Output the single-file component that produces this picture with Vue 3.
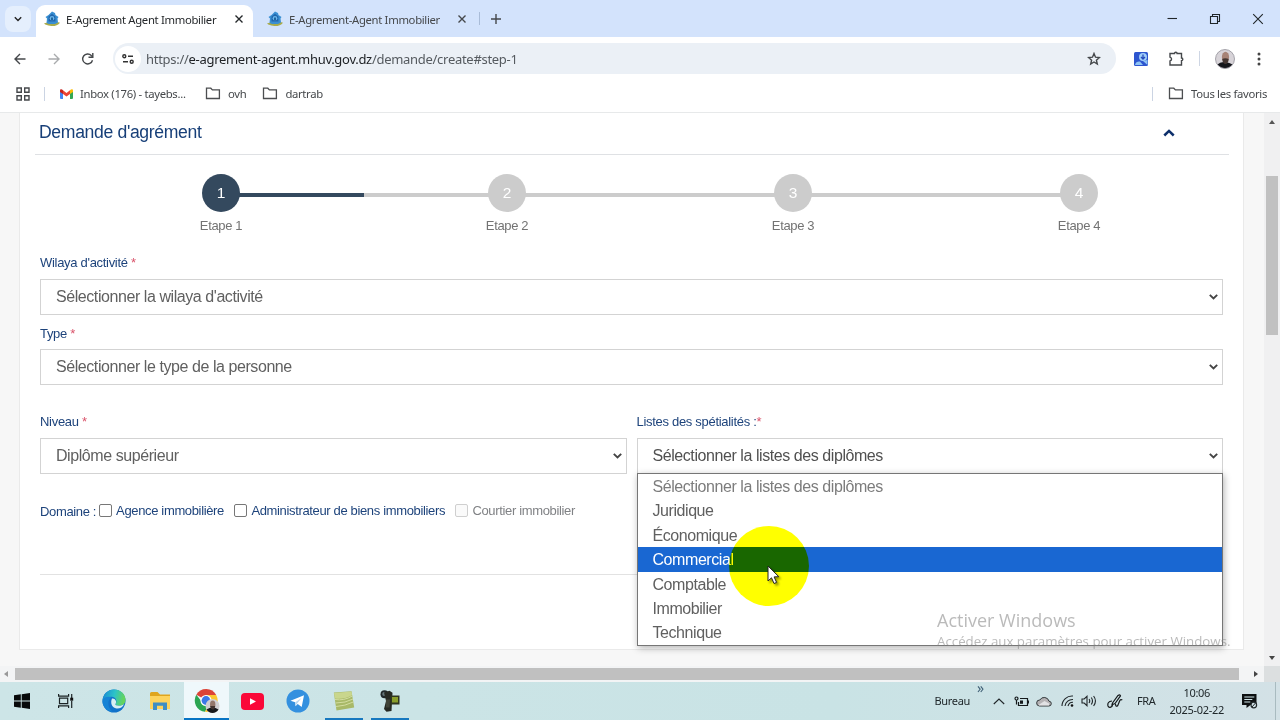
<template>
  <div class="screen">
    <header class="browser">
      <div class="tab-strip">
        <button class="tab-search">
          <svg width="10" height="10" viewBox="0 0 10 10"><path d="M1.800 3.300 5 6.500l3.200-3.200" class="stroke" /></svg>
        </button>
        <div v-for="tab in tabs" :key="tab.title" class="tab" :class="{ active: tab.active }">
          <svg class="favicon" width="16" height="16" viewBox="0 0 16 16">
            <path d="M0 12.500c3-1.800 6 .4 9-.6 2-.8 5-.9 7-.2-2 3-7 4-10 3.100-2-.5-4.500-.9-6-2.300z" fill="#a9ab4b" />
            <path d="M8 .5 11 2l.5 2L14.500 6l-1 1.500.5 4-3 1.500H5L2.500 12 3 7.400 1.500 6l3-2z" fill="#3a8fd2" />
            <path d="M4.500 5.500 8 2.800l3.400 2.700v5H4.500z" fill="#2267ad" />
            <circle cx="8" cy="7.200" r="2.300" fill="#6bb8ec" />
            <path d="M7 6.400h2v3H7z" fill="#20649f" />
          </svg>
          <span class="tab-title">{{ tab.title }}</span>
          <svg class="tab-close" width="10" height="10" viewBox="0 0 10 10"><path d="M1.500 1.500l7 7M8.500 1.500l-7 7" class="stroke" /></svg>
        </div>
        <span class="tab-divider"></span>
        <svg class="new-tab" width="12" height="12" viewBox="0 0 12 12"><path d="M6 1v10M1 6h10" class="stroke" /></svg>
        <div class="window-buttons">
          <svg width="12" height="12" viewBox="0 0 12 12"><path d="M1.500 5.500h9.500" class="thin" /></svg>
          <svg width="12" height="12" viewBox="0 0 12 12"><path d="M1.500 3.500h7v7h-7zM3.500 3.500v-2h7v7h-2" class="thin" /></svg>
          <svg width="12" height="12" viewBox="0 0 12 12"><path d="M1.200 1.200l9.600 9.600M10.800 1.200l-9.600 9.600" class="thin" /></svg>
        </div>
      </div>

      <div class="toolbar">
        <svg class="nav-icon" width="14" height="14" viewBox="0 0 14 14"><path d="M12.500 7H2M7 2 2 7l5 5" class="stroke" /></svg>
        <svg class="nav-icon muted" width="14" height="14" viewBox="0 0 14 14"><path d="M1.500 7H12M7 2l5 5-5 5" class="stroke" /></svg>
        <svg class="nav-icon" width="14" height="14" viewBox="0 0 14 14">
          <path d="M11.500 8.200A5 5 0 1 1 10.300 3.500L11.500 4.700" class="stroke" /><path d="M11.800 1v4.300H7.500" class="stroke" />
        </svg>
        <div class="address">
          <span class="site-info">
            <svg width="14" height="14" viewBox="0 0 14 14">
              <circle cx="3.300" cy="4.200" r="1.500" class="stroke" /><path d="M7 4.200h5M2 9.800h5" class="stroke" /><circle cx="10.700" cy="9.800" r="1.500" class="stroke" />
            </svg>
          </span>
          <span class="url">https://<b>e-agrement-agent.mhuv.gov.dz</b>/demande/create#step-1</span>
          <svg class="star" width="14" height="14" viewBox="0 0 14 14">
            <path d="M7 1.500 8.500 5.200l3.900.3-3 2.700.9 3.900L7 10l-3.300 2.100.9-3.900-3-2.700 3.900-.3z" class="stroke" />
          </svg>
        </div>
        <svg class="extension" width="14" height="14" viewBox="0 0 14 14">
          <rect width="14" height="14" rx="1.500" fill="#2d55cf" />
          <path d="M1 13c.5-3 3-4 5-3.500L9 13zM9 9l4.500 4V8z" fill="#8fc4f4" />
          <circle cx="9" cy="5" r="4" fill="#9fcdf8" /><path d="M9 2.500v4.300M7 5l2 2 2-2" fill="none" stroke="#2449bb" stroke-width="1.300" />
        </svg>
        <svg class="puzzle" width="17" height="17" viewBox="0 0 17 17">
          <path d="M2 3.500h4.500a1.300 1.300 0 0 1 2.600 0h4.400v4.500a1.300 1.300 0 0 1 0 2.600v4.400H2v-4a2 2 0 0 0 0-3.900z" class="stroke" />
        </svg>
        <span class="toolbar-divider"></span>
        <svg class="avatar" width="20" height="20" viewBox="0 0 20 20">
          <circle cx="10" cy="10" r="9.500" fill="#d7d3d8" />
          <path d="M2.500 15.500Q5 12.500 10 13t7.500 2.500A9.500 9.500 0 0 1 2.500 15.500z" fill="#15161b" />
          <ellipse cx="10.500" cy="8" rx="3.600" ry="5.300" fill="#a78376" />
          <path d="M7.200 10c1.500-1 4.500-1 6.500 0-.3 3.500-1.500 5-3.200 5s-3-1.500-3.300-5z" fill="#443632" />
          <circle cx="10" cy="10" r="9.500" fill="none" stroke="#929099" stroke-width=".8" />
        </svg>
        <svg class="kebab" width="4" height="14" viewBox="0 0 4 14"><circle cx="2" cy="2" r="1.500" /><circle cx="2" cy="7" r="1.500" /><circle cx="2" cy="12" r="1.500" /></svg>
      </div>

      <div class="bookmarks">
        <svg class="apps" width="14" height="14" viewBox="0 0 14 14">
          <path d="M1 1h4.300v4.300H1zM8.700 1H13v4.300H8.700zM1 8.700h4.300V13H1zM8.700 8.700H13V13H8.700z" class="stroke" />
        </svg>
        <span class="bookmark-divider first"></span>
        <div class="bookmark gmail">
          <svg width="13" height="10" viewBox="0 0 13 10">
            <path d="M0 1.500 3 3.500V10H1a1 1 0 0 1-1-1z" fill="#4285f4" /><path d="M13 1.500 10 3.500V10h2a1 1 0 0 0 1-1z" fill="#34a853" />
            <path d="M3 1.200 6.500 4 10 1.200V5L6.500 7.600 3 5z" fill="#ea4335" />
            <path d="M0 1.500C0 0 1.600-.4 3 1.200V5L0 2.900z" fill="#c5221f" /><path d="M13 1.500C13 0 11.400-.4 10 1.200V5l3-2.100z" fill="#fbbc04" />
          </svg>
          <span>Inbox (176) - tayebs...</span>
        </div>
        <div v-for="name in folders" :key="name" class="bookmark">
          <svg width="16" height="13" viewBox="0 0 16 13"><path d="M1.500 1.200h4.300l1.600 1.700h7v8.600H1.500z" class="folder" /></svg>
          <span>{{ name }}</span>
        </div>
        <span class="bookmark-divider last"></span>
        <div class="bookmark all">
          <svg width="16" height="13" viewBox="0 0 16 13"><path d="M1.500 1.200h4.300l1.600 1.700h7v8.600H1.500z" class="folder" /></svg>
          <span>Tous les favoris</span>
        </div>
      </div>
    </header>

    <div class="viewport">
      <main class="page">
        <section class="panel">
          <div class="panel-title">
            <h2>Demande d'agrément</h2>
            <svg width="12" height="8" viewBox="0 0 12 8"><path d="M1.300 6.500 6 1.900l4.700 4.600" fill="none" stroke="#0d2f6b" stroke-width="2.500" /></svg>
          </div>

          <ol class="steps">
            <li v-for="n in 4" :key="n" :class="{ selected: n === 1 }">
              <span class="step-no">{{ n }}</span>
              <span class="step-label">Etape {{ n }}</span>
            </li>
          </ol>

          <form class="form">
            <div v-for="field in fields" :key="field.label" class="field" :class="field.size">
              <label>{{ field.label }}<i>*</i></label>
              <div class="select" :class="{ open: field.open }">
                <span>{{ field.value }}</span>
                <svg width="9" height="6" viewBox="0 0 9 6"><path d="M.8.900 4.500 4.500 8.200.9" fill="none" stroke="#444" stroke-width="1.900" /></svg>
              </div>
              <ul v-if="field.open" class="options">
                <li v-for="(option, i) in options" :key="option" :class="{ placeholder: i === 0, hovered: option === 'Commercial' }">
                  <span>{{ option }}</span>
                </li>
              </ul>
            </div>
          </form>

          <div class="domains">
            <span class="domain-title">Domaine :</span>
            <label v-for="domain in domains" :key="domain.label" :class="{ disabled: domain.disabled }">
              <span class="box"></span>
              <span class="text">{{ domain.label }}</span>
            </label>
          </div>
          <hr />
        </section>
      </main>
      <div class="v-scroll">
        <span class="arrow up"></span>
        <span class="v-thumb"></span>
        <span class="arrow down"></span>
      </div>
      <div class="h-scroll">
        <span class="arrow left"></span>
        <span class="h-thumb"></span>
        <span class="arrow right"></span>
      </div>
      <div class="corner"></div>
    </div>

    <footer class="taskbar">
      <div class="task">
        <svg width="16" height="16" viewBox="0 0 16 16"><path d="M0 2.300 6.800 1.300v6.300H0zM7.700 1.200 16 0v7.600H7.700zM0 8.500h6.800v6.300L0 13.800zM7.700 8.500H16V16l-8.300-1.200z" fill="#080a0b" /></svg>
      </div>
      <div class="task">
        <svg width="16" height="16" viewBox="0 0 16 16">
          <path d="M.6 1v2.200h10V1M.6 15v-2.200h10V15M1.500 5.200h8.200v5.500H1.500zM13.700 1v4M13.700 8v7" fill="none" stroke="#1b2325" stroke-width="1.200" /><path d="M12.200 4.700h3v3h-3z" fill="#111" />
        </svg>
      </div>
      <div class="task">
        <svg width="24" height="24" viewBox="0 0 24 24">
          <defs>
            <linearGradient id="edge" x1="0" y1="0" x2="1" y2=".2"><stop offset="0" stop-color="#1985d4" /><stop offset=".55" stop-color="#2cc3c9" /><stop offset="1" stop-color="#65d45c" /></linearGradient>
          </defs>
          <circle cx="12" cy="12" r="11.500" fill="#1272ca" />
          <path d="M.7 11C1.500 4.600 6.300.5 12 .5c6.500 0 11.500 4.800 11.500 10.200 0 4.100-3.300 6-6.500 6-2.700 0-4-.8-3.600-1.600 2.500-3.300.1-7.300-3.600-7.400C5.500 7.600 1.900 9 .7 11z" fill="url(#edge)" />
          <path d="M9.700 8.500c-5 2.500-4.200 10.500 1 14.300C3.600 22.500-.6 15.500.7 10.800 2.500 7.500 7 7 9.700 8.500z" fill="#1683d5" />
          <path d="M10 9.500c2.900-.8 5.400 2.900 3.400 5.600-.5.900 1 1.600 3.600 1.600 2 0 4-.7 5.200-1.800-1.500 3.300-4.600 4.900-7.700 4.500-4.500-.5-6.500-5.500-4.500-9.900z" fill="#d9eef2" />
        </svg>
      </div>
      <div class="task">
        <svg width="22" height="18" viewBox="0 0 22 18">
          <path d="M1 1.500A1.500 1.500 0 0 1 2.500 0h6L11 2.500h10V17H1z" fill="#dfa51e" /><path d="M1 4h20v13H1z" fill="#fdd35d" />
          <path d="M4 18v-7.500h14V18h-4v-4.300H8V18z" fill="#3e8ec4" />
        </svg>
      </div>
      <div class="task current">
        <svg width="26" height="26" viewBox="0 0 26 26">
          <path d="M12 12 2.300 6.800A11.300 11.300 0 0 1 22.200 7z" fill="#dc4337" /><path d="M2.300 6.800A11.300 11.300 0 0 0 11 23.800l5-8.800-8-1z" fill="#2ba552" />
          <path d="M22.200 7A11.400 11.400 0 0 1 11 23.800L16.500 13 12 7z" fill="#fcc831" />
          <circle cx="12" cy="12.500" r="5.600" fill="#fff" /><circle cx="12" cy="12.500" r="4.400" fill="#3b78e7" />
          <circle cx="18.500" cy="18" r="7" fill="#d1cfd2" /><path d="M12.500 21.500q6-4 12 0a7 7 0 0 1-12 0z" fill="#17191d" />
          <ellipse cx="18.700" cy="16.500" rx="2.700" ry="4" fill="#94776b" /><path d="M16.200 18h5c-.4 3-1.300 3.500-2.500 3.500s-2.200-1-2.500-3.500z" fill="#41332f" />
        </svg>
      </div>
      <div class="task">
        <svg width="23" height="17" viewBox="0 0 23 17"><rect width="23" height="17" rx="4" fill="#fa0838" /><path d="M9 5.200 15 8.500 9 11.800z" fill="#fff" /></svg>
      </div>
      <div class="task">
        <svg width="24" height="24" viewBox="0 0 24 24"><circle cx="12" cy="12" r="11.500" fill="#3390df" /><path d="M4.500 11.800 18 6.300l-2.300 11.800-4-3-2.200 2.100-.3-4z" fill="#fff" /><path d="M9.300 13.200 15.500 9l-4.300 5.400-1.700 2.700z" fill="#b9d7ef" /></svg>
      </div>
      <div class="task running">
        <svg width="22" height="20" viewBox="0 0 22 20">
          <path d="M.8 1.500 18.500.3 21.200 16.500 3.500 19.600z" fill="#a8b968" /><path d="M1 2 18.500.5l.6 3.800Q10 9 2 7.500z" fill="#c9d68d" />
          <path d="M2 8.500Q11 10 19.300 5M2.700 12q10 0 17.300-4M3 15.500Q12 15 20.300 11" fill="none" stroke="#d3dda0" stroke-width="1" />
        </svg>
      </div>
      <div class="task running">
        <svg width="20" height="22" viewBox="0 0 20 22">
          <circle cx="4.500" cy="4.300" r="4" fill="#20272a" /><circle cx="4.200" cy="4" r="2" fill="#66777b" />
          <path d="M4 2.500 9.500.8l3 2-1 18.200-5 .8L4 19l2-8z" fill="#272923" /><path d="M10.500 5.500h9v9h-9z" fill="#303721" /><path d="M12 7h6v5.500h-6z" fill="#8a9e2c" /><path d="M6 9.500h4l-.5 8H6z" fill="#414337" />
        </svg>
      </div>

      <div class="tray">
        <span class="desktop">Bureau</span>
        <span class="more">»</span>
        <svg class="chevron" width="12" height="7" viewBox="0 0 12 7"><path d="M.8 6 6 1l5.200 5" class="thin" /></svg>
        <svg class="battery" width="15" height="11" viewBox="0 0 15 11">
          <path d="M6 2.500h7.500v7h-9V6" class="medium" /><circle cx="2.500" cy="2.500" r="1.500" class="medium" /><path d="M2.500 4v4.500M14.500 4.500v3" class="medium" /><path d="M6 4.500h3v3.300H6z" fill="#14191b" />
        </svg>
        <svg class="cloud" width="16" height="11" viewBox="0 0 16 11"><path d="M3.500 10h9.300a2.400 2.400 0 0 0 .2-4.800A5 5 0 0 0 3.800 4 3 3 0 0 0 3.500 10z" fill="#b5b2b4" stroke="#32383b" /><path d="M2.500 9 8.500 5l4.500 2.500v2H3z" fill="#e2e2e4" /></svg>
        <svg class="wifi" width="13" height="12" viewBox="0 0 13 12"><path d="M1 11A10 10 0 0 1 12 1M4 11a7.500 7.500 0 0 1 8-6.500M7 11a5 5 0 0 1 5-3.800" class="thin" /><circle cx="11" cy="10.500" r="1.300" fill="#111" /></svg>
        <svg class="sound" width="16" height="12" viewBox="0 0 16 12"><path d="M1 4h2.200L6 1.300v9.400L3.200 8H1zM8 4q1.500 2 0 4M10.300 2.500q2.400 3.500 0 7M12.600 1q3.700 5 0 10" class="thin" /></svg>
        <svg class="pen" width="16" height="16" viewBox="0 0 16 16"><path d="m5.500 10 5.500-7.500q2-1.500 2.500.3L8 10.500l-3 1.200zM5 8Q0 8.500 1 13c1 2.500 5 1 4.300-1.500M8.500 11q.3 3.500 2.300 1.500l2-5q1-1.500 2.500-.5" class="medium" /></svg>
        <span class="lang">FRA</span>
        <span class="clock"><span>10:06</span><span>2025-02-22</span></span>
        <svg class="notice" width="17" height="16" viewBox="0 0 17 16"><path d="M1 1h14.500v11H9.500L5.500 15v-3H1z" fill="#0d1011" /><path d="M3.300 4h10M3.300 6.500h8M3.300 9h6" stroke="#d2e6e9" stroke-width="1.100" /><circle cx="12.800" cy="12" r="2.800" fill="#d2e2e7" stroke="#22292b" stroke-width="1.200" /><path d="m11 14 3.500-4" stroke="#22292b" /></svg>
        <span class="peek"></span>
      </div>
    </footer>

    <div class="watermark">
      <strong>Activer Windows</strong>
      <span>Accédez aux paramètres pour activer Windows.</span>
    </div>
    <div class="halo"></div>
    <svg class="cursor" width="14" height="20" viewBox="0 0 14 20"><path d="M1 1v15l3.500-3.200L7 18.500l2.600-1.100-2.500-5.500 4.700-.2z" fill="#fff" stroke="#222" /></svg>
  </div>
</template>

<script setup>
  const tabs = [
    { title: 'E-Agrement Agent Immobilier', active: true },
    { title: 'E-Agrement-Agent Immobilier', active: false },
  ]

  const folders = ['ovh', 'dartrab']

  const fields = [
    { label: "Wilaya d'activité ", value: "Sélectionner la wilaya d'activité", size: 'wide' },
    { label: 'Type ', value: 'Sélectionner le type de la personne', size: 'wide spaced' },
    { label: 'Niveau ', value: 'Diplôme supérieur', size: 'half' },
    { label: 'Listes des spétialités :', value: 'Sélectionner la listes des diplômes', size: 'half', open: true },
  ]

  const options = [
    'Sélectionner la listes des diplômes',
    'Juridique',
    'Économique',
    'Commercial',
    'Comptable',
    'Immobilier',
    'Technique',
  ]

  const domains = [
    { label: 'Agence immobilière' },
    { label: 'Administrateur de biens immobiliers' },
    { label: 'Courtier immobilier', disabled: true },
  ]
</script>

<style>
  body {
    margin: 0;
    overflow: hidden;
  }
</style>

<style scoped>
  * {
    box-sizing: border-box;
  }

  .screen {
    position: relative;
    width: 1280px;
    height: 720px;
    overflow: hidden;
    display: flex;
    flex-direction: column;
    background: #fff;
    font-family: 'Liberation Sans', Arial, sans-serif;
  }

  svg {
    display: block;
    flex: none;
  }

  .stroke {
    fill: none;
    stroke: currentColor;
    stroke-width: 1.4;
  }

  .folder {
    fill: none;
    stroke: #4c4e50;
    stroke-width: 1.3;
  }

  .thin {
    fill: none;
    stroke: #202629;
    stroke-width: 1.1;
  }

  .medium {
    fill: none;
    stroke: #14191b;
    stroke-width: 1.2;
  }

  .browser {
    height: 113px;
    flex: none;
    background: #fff;
    border-bottom: 1px solid #e7e9ea;
    color: #45484b;
    font-family: 'Noto Sans', 'Open Sans', sans-serif;
    font-size: 11.3px;
    letter-spacing: -0.32px;
  }

  .tab-strip {
    height: 37px;
    background: #d3e3fc;
    display: flex;
    align-items: center;
    padding-left: 5px;
  }

  .tab-search {
    width: 26px;
    height: 26px;
    border: 0;
    padding: 0;
    border-radius: 8px;
    background: #e5effd;
    display: flex;
    align-items: center;
    justify-content: center;
    color: #222;
    margin-right: 5px;
  }

  .tab {
    height: 32px;
    width: 217px;
    align-self: flex-end;
    display: flex;
    align-items: center;
    padding: 0 9px 4px 8px;
    border-radius: 9px 9px 0 0;
  }

  .tab + .tab {
    width: 223px;
    padding-left: 14px;
  }

  .tab.active {
    background: #fff;
    color: #25282b;
  }

  .tab-title {
    flex: 1;
    margin-left: 6px;
    white-space: nowrap;
  }

  .tab-divider {
    width: 1px;
    height: 13px;
    margin-left: 3px;
    background: #a9bcd8;
  }

  .new-tab {
    margin-left: 10px;
  }

  .window-buttons {
    display: flex;
    gap: 31px;
    margin-left: auto;
    margin-right: 16px;
  }

  .toolbar {
    height: 43px;
    display: flex;
    align-items: center;
    padding: 0 19px 0 13px;
  }

  .nav-icon {
    margin-right: 20px;
  }

  .nav-icon.muted {
    color: #a9abad;
  }

  .address {
    width: 1003px;
    height: 31px;
    border-radius: 16px;
    background: #ebf0f6;
    display: flex;
    align-items: center;
    padding: 0 15px 0 2px;
    margin-left: -2px;
  }

  .site-info {
    width: 26px;
    height: 26px;
    border-radius: 50%;
    background: #fff;
    display: flex;
    align-items: center;
    justify-content: center;
    color: #333;
  }

  .url {
    margin-left: 5px;
    font-size: 13px;
    letter-spacing: -0.29px;
    color: #555a5f;
  }

  .url b {
    font-weight: 400;
    color: #202327;
  }

  .star {
    margin-left: auto;
  }

  .extension {
    margin-left: 18px;
  }

  .puzzle {
    margin-left: 20px;
  }

  .toolbar-divider {
    width: 1px;
    height: 15px;
    margin-left: 14px;
    background: #ced6e4;
  }

  .avatar {
    margin-left: 15px;
  }

  .kebab {
    margin-left: auto;
    fill: #444;
  }

  .bookmarks {
    height: 28px;
    display: flex;
    align-items: center;
    padding: 0 13px 1px 16px;
  }

  .bookmark-divider {
    width: 1px;
    height: 14px;
    background: #cbd4e3;
  }

  .bookmark-divider.first {
    margin-left: 14px;
  }

  .bookmark-divider.last {
    margin-left: auto;
  }

  .bookmark {
    display: flex;
    align-items: center;
    gap: 7px;
    margin-left: 16px;
    white-space: nowrap;
  }

  .bookmark.gmail {
    margin-left: 15px;
    width: 129px;
  }

  .bookmark.all {
    margin-left: 15px;
  }

  .viewport {
    height: 569px;
    flex: none;
    display: grid;
    grid-template-columns: 1264px 16px;
    grid-template-rows: 553px 16px;
  }

  .page {
    background: #f7f7f7;
    overflow: hidden;
    padding: 0 20px 0 19px;
  }

  .panel {
    width: 1225px;
    height: 537px;
    background: #fff;
    border: solid #eaeaea;
    border-width: 0 1px 1px;
    padding: 0 14px 0 15px;
  }

  .panel-title {
    height: 42px;
    display: flex;
    align-items: center;
    justify-content: space-between;
    padding: 0 54px 1px 4px;
    border-bottom: 1px solid #dfe1e4;
  }

  .panel-title h2 {
    margin: 0 0 1px;
    font-size: 17.6px;
    font-weight: 400;
    letter-spacing: -0.34px;
    color: #173f78;
  }

  .steps {
    list-style: none;
    display: grid;
    grid-template-columns: repeat(4, 286px);
    margin: 19px 0 0 43px;
    padding: 0;
  }

  .steps li {
    position: relative;
    display: flex;
    flex-direction: column;
    align-items: center;
  }

  .steps li::before {
    content: '';
    position: absolute;
    top: 19px;
    left: 0;
    width: 100%;
    height: 4px;
    background: #ccc;
  }

  .steps li:first-child::before {
    left: 50%;
    width: 50%;
    background: #34495e;
  }

  .steps li:last-child::before {
    width: 50%;
  }

  .step-no {
    position: relative;
    width: 38px;
    height: 38px;
    line-height: 37px;
    border-radius: 50%;
    background: #ccc;
    color: #fff;
    text-align: center;
    font-size: 15.5px;
  }

  .selected .step-no {
    background: #34495e;
  }

  .step-label {
    margin-top: 5px;
    font-size: 13px;
    letter-spacing: -0.35px;
    line-height: 17px;
    color: #737373;
  }

  .form {
    display: flex;
    flex-wrap: wrap;
    column-gap: 10px;
    width: 1183px;
    margin: 20px 0 0 5px;
  }

  .field {
    width: 586.5px;
    height: 70px;
    position: relative;
  }

  .field.wide {
    width: 1183px;
  }

  .field.wide.spaced {
    height: 89px;
  }

  .field > label {
    display: block;
    height: 25px;
    line-height: 17px;
    font-size: 13px;
    letter-spacing: -0.3px;
    color: #1d437b;
    white-space: pre;
  }

  .field.spaced > label {
    line-height: 19px;
  }

  .field i {
    font-style: normal;
    color: #d9536a;
  }

  .select {
    height: 36px;
    border: 1px solid #d3d3d3;
    display: flex;
    align-items: center;
    justify-content: space-between;
    padding: 0 4px 1px 15px;
    font-size: 16px;
    letter-spacing: -0.43px;
    color: #606060;
  }

  .half .select {
    padding-bottom: 0;
  }

  .select.open {
    color: #505050;
  }

  .options {
    position: absolute;
    top: 60px;
    left: 0;
    z-index: 1;
    width: 100%;
    height: 173px;
    margin: 0;
    padding: 0;
    list-style: none;
    background: #fff;
    border: 1px solid #767676;
    box-shadow: 1px 2px 7px rgba(0, 0, 0, 0.3);
    font-size: 16px;
    letter-spacing: -0.43px;
    color: #606060;
  }

  .options li {
    height: 24.4px;
    line-height: 25.4px;
    padding-left: 15px;
  }

  .options .placeholder {
    color: #7c7c7c;
  }

  .options .hovered {
    background: #1967d2;
    color: #fff;
  }

  .domains {
    height: 20px;
    display: flex;
    align-items: center;
    margin: 17px 0 0 5px;
    font-size: 13px;
    letter-spacing: -0.35px;
    color: #1d437b;
    white-space: nowrap;
  }

  .domain-title {
    padding-top: 3px;
    margin-right: 3px;
  }

  .domains label {
    display: flex;
    align-items: center;
    margin-right: 10.4px;
  }

  .box {
    width: 13px;
    height: 13px;
    border: 1px solid #777;
    border-radius: 2px;
    margin-right: 4px;
  }

  .disabled {
    color: #808285;
  }

  .disabled .box {
    border-color: #cfcfcf;
    background: #fafafa;
  }

  .panel hr {
    height: 1px;
    border: 0;
    background: #e2e2e2;
    margin: 54px 6px 0 5px;
  }

  .v-scroll {
    background: #f0f0f1;
    display: flex;
    flex-direction: column;
    align-items: center;
    padding: 7px 0 6px;
  }

  .v-thumb {
    width: 12px;
    height: 159px;
    margin-top: 52px;
    background: #c1c1c1;
  }

  .arrow {
    border: 3px solid transparent;
    flex: none;
  }

  .arrow.up {
    border-top: 0;
    border-bottom: 4px solid #555;
  }

  .arrow.down {
    border-bottom: 0;
    border-top: 4px solid #444;
    margin-top: auto;
  }

  .h-scroll {
    background: #f3f4f5;
    display: flex;
    align-items: center;
    padding: 0 6px 0 4px;
  }

  .arrow.left {
    border-left: 0;
    border-right: 4px solid #999;
  }

  .h-thumb {
    width: 1224px;
    height: 12px;
    margin-left: 7px;
    background: #c0c0c0;
  }

  .arrow.right {
    border-right: 0;
    border-left: 4px solid #444;
    margin-left: auto;
  }

  .corner {
    background: #dcdfe0;
  }

  .taskbar {
    height: 38px;
    flex: none;
    display: flex;
    background: linear-gradient(90deg, #cde5e7, #c9e3e5 65%, #d3e1e6);
    font-family: 'Noto Sans', 'Open Sans', sans-serif;
    color: #20282b;
  }

  .task {
    width: 46px;
    height: 38px;
    display: flex;
    align-items: center;
    justify-content: center;
    border-bottom: 2px solid transparent;
    padding-top: 2px;
  }

  .task:first-child {
    width: 43px;
  }

  .task:nth-child(3) {
    margin-left: 2px;
  }

  .task:nth-child(4) {
    margin-right: 1px;
  }

  .task.current {
    width: 45px;
    background: #eff8fb;
    border-color: #0874c4;
  }

  .task.running {
    width: 38px;
    margin: 0 4px;
    border-color: #1778bf;
  }

  .tray {
    flex: 1;
    display: flex;
    align-items: center;
    justify-content: flex-end;
    font-size: 11px;
    letter-spacing: -0.3px;
  }

  .desktop {
    margin-top: -1px;
  }

  .more {
    align-self: flex-start;
    margin: -1px 0 0 7px;
    font-size: 14px;
    line-height: 14px;
    color: #416177;
  }

  .chevron {
    margin-left: 9px;
  }

  .battery {
    margin-left: 9px;
  }

  .cloud {
    margin-left: 7px;
  }

  .wifi {
    margin-left: 9px;
  }

  .sound {
    margin-left: 7px;
  }

  .pen {
    margin-left: 10px;
  }

  .lang {
    margin: -1px 0 0 14px;
  }

  .clock {
    display: flex;
    flex-direction: column;
    align-items: center;
    line-height: 17px;
    margin: -1px 0 0 14px;
  }

  .notice {
    margin-left: 17px;
  }

  .peek {
    width: 5px;
    height: 38px;
    margin-left: 17px;
    border-left: 1px solid #a9bbc0;
  }

  .watermark {
    position: absolute;
    left: 937px;
    top: 608px;
    z-index: 2;
    display: flex;
    flex-direction: column;
    font-family: 'Open Sans', 'Noto Sans', sans-serif;
    font-size: 13.3px;
    line-height: 18px;
    color: rgba(130, 130, 130, 0.55);
    white-space: nowrap;
  }

  .watermark strong {
    font-size: 18px;
    font-weight: 400;
    line-height: 24px;
  }

  .halo {
    position: absolute;
    left: 729px;
    top: 526px;
    z-index: 3;
    width: 80px;
    height: 80px;
    border-radius: 50%;
    background: #ff0;
    mix-blend-mode: multiply;
  }

  .cursor {
    position: absolute;
    left: 767px;
    top: 565px;
    z-index: 4;
    filter: drop-shadow(2px 2px 1px rgba(0, 0, 0, 0.4));
  }
</style>
